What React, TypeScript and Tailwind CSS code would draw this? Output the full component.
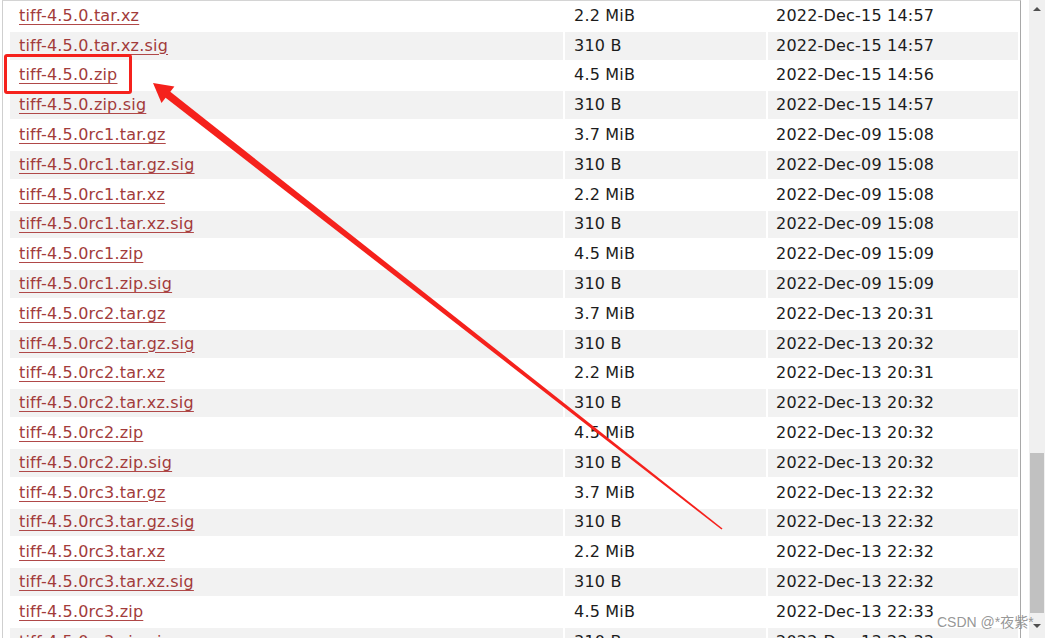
const rows: [string, string, string][] = [
  ['tiff-4.5.0.tar.xz', '2.2 MiB', '2022-Dec-15 14:57'],
  ['tiff-4.5.0.tar.xz.sig', '310 B', '2022-Dec-15 14:57'],
  ['tiff-4.5.0.zip', '4.5 MiB', '2022-Dec-15 14:56'],
  ['tiff-4.5.0.zip.sig', '310 B', '2022-Dec-15 14:57'],
  ['tiff-4.5.0rc1.tar.gz', '3.7 MiB', '2022-Dec-09 15:08'],
  ['tiff-4.5.0rc1.tar.gz.sig', '310 B', '2022-Dec-09 15:08'],
  ['tiff-4.5.0rc1.tar.xz', '2.2 MiB', '2022-Dec-09 15:08'],
  ['tiff-4.5.0rc1.tar.xz.sig', '310 B', '2022-Dec-09 15:08'],
  ['tiff-4.5.0rc1.zip', '4.5 MiB', '2022-Dec-09 15:09'],
  ['tiff-4.5.0rc1.zip.sig', '310 B', '2022-Dec-09 15:09'],
  ['tiff-4.5.0rc2.tar.gz', '3.7 MiB', '2022-Dec-13 20:31'],
  ['tiff-4.5.0rc2.tar.gz.sig', '310 B', '2022-Dec-13 20:32'],
  ['tiff-4.5.0rc2.tar.xz', '2.2 MiB', '2022-Dec-13 20:31'],
  ['tiff-4.5.0rc2.tar.xz.sig', '310 B', '2022-Dec-13 20:32'],
  ['tiff-4.5.0rc2.zip', '4.5 MiB', '2022-Dec-13 20:32'],
  ['tiff-4.5.0rc2.zip.sig', '310 B', '2022-Dec-13 20:32'],
  ['tiff-4.5.0rc3.tar.gz', '3.7 MiB', '2022-Dec-13 22:32'],
  ['tiff-4.5.0rc3.tar.gz.sig', '310 B', '2022-Dec-13 22:32'],
  ['tiff-4.5.0rc3.tar.xz', '2.2 MiB', '2022-Dec-13 22:32'],
  ['tiff-4.5.0rc3.tar.xz.sig', '310 B', '2022-Dec-13 22:32'],
  ['tiff-4.5.0rc3.zip', '4.5 MiB', '2022-Dec-13 22:33'],
  ['tiff-4.5.0rc3.zip.sig', '310 B', '2022-Dec-13 22:33'],
];

// tail (722,529) -> tip (153,83), tapered shaft + head
function Arrow() {
  const tip = [153, 83];
  const tail = [722, 529];
  const dx = tip[0] - tail[0];
  const dy = tip[1] - tail[1];
  const len = Math.hypot(dx, dy);
  const ux = dx / len;
  const uy = dy / len;
  const nx = -uy;
  const ny = ux;
  const headLen = 19;
  const headHalf = 10.5;
  const bx = tip[0] - ux * headLen;
  const by = tip[1] - uy * headLen;
  const p = (x: number, y: number) => `${x.toFixed(1)},${y.toFixed(1)}`;
  const shaft = [
    p(tail[0] + nx * 0.8, tail[1] + ny * 0.8),
    p(bx + ux * 2 + nx * 3.8, by + uy * 2 + ny * 3.8),
    p(bx + ux * 2 - nx * 3.8, by + uy * 2 - ny * 3.8),
    p(tail[0] - nx * 0.8, tail[1] - ny * 0.8),
  ].join(' ');
  const head = [
    p(tip[0], tip[1]),
    p(bx + nx * headHalf, by + ny * headHalf),
    p(bx - nx * headHalf, by - ny * headHalf),
  ].join(' ');
  return (
    <svg className="pointer-events-none absolute left-0 top-0" width={1045} height={638}>
      <polygon points={shaft} fill="#f5211c" />
      <polygon points={head} fill="#f5211c" />
    </svg>
  );
}

export default function App() {
  return (
    <div
      className="relative flex h-[638px] w-[1045px] overflow-hidden bg-white text-[16px] tracking-[0.2px]"
      style={{ fontFamily: '"DejaVu Sans", Verdana, sans-serif' }}
    >
      <div className="ml-[2px] h-full w-[1019px] border-l border-r border-t border-l-[#cfcfcf] border-r-[#a8a8a8] border-t-[#d4d4d4] pl-[7px]">
        <div className="grid grid-cols-[553px_201px_250px] gap-x-[2px] gap-y-[2px] pt-[1px]">
          {rows.map(([name, size, date], i) => {
            const bg = i % 2 === 1 ? 'bg-[#f2f2f2]' : 'bg-white';
            return (
              <div key={name} className="contents">
                <div className={`flex h-[27.8px] items-center pl-[9px] ${bg}`}>
                  <a className="text-[#a23b3b] underline decoration-[#b04848] underline-offset-[3px]">{name}</a>
                </div>
                <div className={`flex h-[27.8px] items-center pl-[9px] text-[#1c1c1c] ${bg}`}>{size}</div>
                <div className={`flex h-[27.8px] items-center pl-[8px] text-[#1c1c1c] ${bg}`}>{date}</div>
              </div>
            );
          })}
        </div>
      </div>
      <div className="ml-[8px] flex h-full w-[16px] flex-col bg-[#f0f0f0]">
        <div className="flex h-[17px] items-center justify-center">
          <div className="h-0 w-0 border-x-[4px] border-b-[4px] border-x-transparent border-b-[#505050]" />
        </div>
        <div className="h-[436px]" />
        <div className="mx-[1px] h-[160px] bg-[#c1c1c1]" />
        <div className="flex flex-1 items-center justify-center">
          <div className="h-0 w-0 border-x-[4px] border-t-[4px] border-x-transparent border-t-[#505050]" />
        </div>
      </div>

      <div className="pointer-events-none absolute left-[4px] top-[54px] h-[40px] w-[128px] rounded-[3px] border-[3px] border-[#f5211c]" />
      <Arrow />
      <div
        className="pointer-events-none absolute left-[937px] top-[612px] text-[14px] tracking-normal text-[#8a8a8a]/90"
        style={{ fontFamily: 'Arial, "Liberation Sans", "Noto Sans CJK SC", sans-serif' }}
      >
        CSDN @*夜紫*
      </div>
    </div>
  );
}
